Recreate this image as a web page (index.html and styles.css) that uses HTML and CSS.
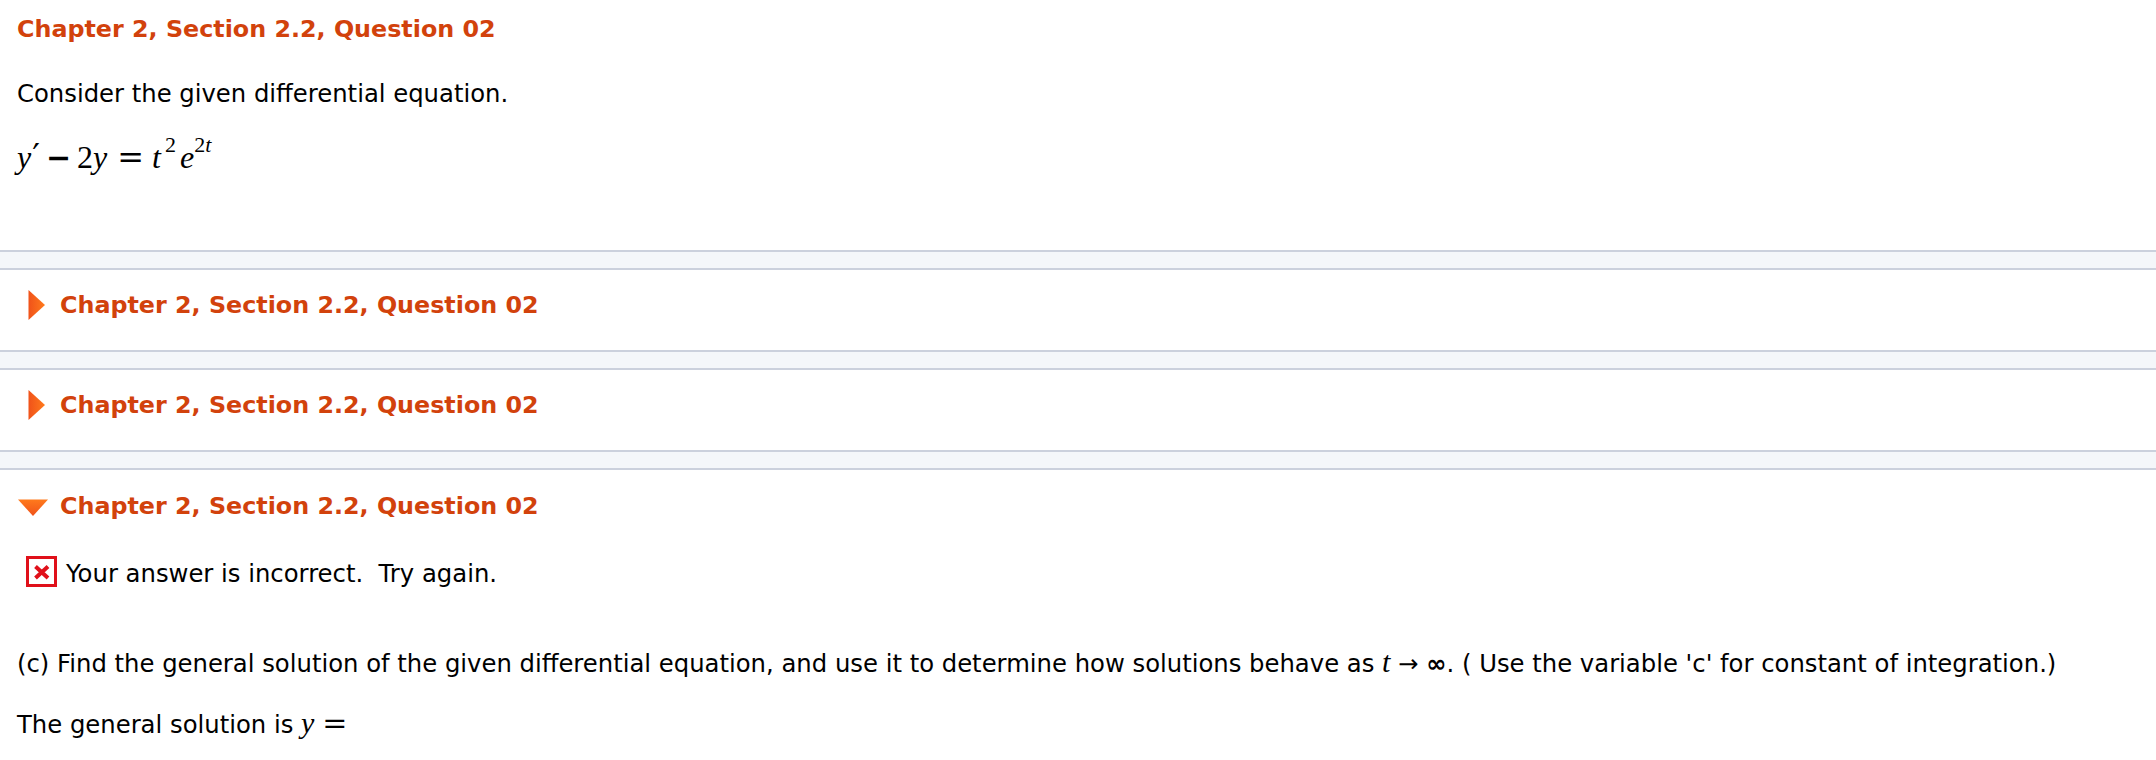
FILE: index.html
```html
<!DOCTYPE html>
<html lang="en">
<head>
<meta charset="utf-8">
<title>Chapter 2, Section 2.2, Question 02</title>
<link rel="stylesheet" href="styles.css">
</head>
<body>
<div class="intro">
  <h1 class="title">Chapter 2, Section 2.2, Question 02</h1>
  <p class="lead">Consider the given differential equation.</p>
  <div class="eq"><i>y</i><span class="prime">′</span><span class="minus">−</span><span class="num">2</span><i>y</i><span class="eqs">=</span><i>t</i><sup class="sq">2</sup><i class="ee">e</i><sup>2<i>t</i></sup></div>
</div>

<div class="sep"></div>
<div class="qhead">
  <svg class="arr-right" width="17" height="30" viewBox="0 0 17 30" aria-hidden="true">
    <defs><linearGradient id="gr1" x1="0" y1="0" x2="1" y2="0"><stop offset="0" stop-color="#f0521a"/><stop offset="1" stop-color="#ff7a1c"/></linearGradient></defs>
    <polygon points="0.5,0 17,15 0.5,30" fill="url(#gr1)"/>
  </svg>
  <span class="qtitle">Chapter 2, Section 2.2, Question 02</span>
</div>
<div class="sep"></div>
<div class="qhead">
  <svg class="arr-right" width="17" height="30" viewBox="0 0 17 30" aria-hidden="true">
    <defs><linearGradient id="gr2" x1="0" y1="0" x2="1" y2="0"><stop offset="0" stop-color="#f0521a"/><stop offset="1" stop-color="#ff7a1c"/></linearGradient></defs>
    <polygon points="0.5,0 17,15 0.5,30" fill="url(#gr2)"/>
  </svg>
  <span class="qtitle">Chapter 2, Section 2.2, Question 02</span>
</div>
<div class="sep"></div>
<div class="qhead open">
  <svg class="arr-down" width="30" height="17" viewBox="0 0 30 17" aria-hidden="true">
    <defs><linearGradient id="gr3" x1="0" y1="0" x2="0" y2="1"><stop offset="0" stop-color="#ff7a1c"/><stop offset="1" stop-color="#f0521a"/></linearGradient></defs>
    <polygon points="0,0.5 30,0.5 15,17" fill="url(#gr3)"/>
  </svg>
  <span class="qtitle">Chapter 2, Section 2.2, Question 02</span>
</div>

<div class="feedback">
  <svg class="xbox" width="31" height="31" viewBox="0 0 31 31" aria-hidden="true">
    <rect x="1.5" y="1.5" width="28" height="28" fill="#fff" stroke="#e0101a" stroke-width="3"/>
    <path d="M9.5 10.5 L22 22 M22 10.5 L9.5 22" stroke="#e0101a" stroke-width="4" fill="none"/>
  </svg>
  <span class="fbtext">Your answer is incorrect.&nbsp; Try again.</span>
</div>

<p class="part">(c) Find the general solution of the given differential equation, and use it to determine how solutions behave as <i class="m">t</i> <span class="arrow">→</span> <span class="inf">∞</span>. ( Use the variable 'c' for constant of integration.)</p>
<p class="answer">The general solution is <i class="my">y</i> <span class="meq">=</span></p>
</body>
</html>
```
FILE: styles.css
```css
html, body {
  margin: 0;
  padding: 0;
  background: #ffffff;
}
body {
  font-family: "DejaVu Sans", Verdana, sans-serif;
  font-size: 24.3px;
  line-height: 28px;
  color: #000000;
}

.intro {
  height: 250px;
  box-sizing: border-box;
  padding: 15px 0 0 17px;
}
.title {
  margin: 0;
  font-size: 23.8px;
  line-height: 28px;
  font-weight: bold;
  color: #d2420c;
}
.lead {
  margin: 37px 0 0 0;
}

.eq {
  margin-top: 29px;
  font-family: "Liberation Serif", "Times New Roman", serif;
  font-size: 32px;
  line-height: 40px;
  white-space: nowrap;
}
.eq i {
  font-style: italic;
}
.eq .prime {
  font-family: "DejaVu Serif", serif;
  font-size: 34px;
  line-height: 0;
  margin-left: 1px;
}
.eq .minus {
  font-family: "DejaVu Sans", sans-serif;
  font-weight: bold;
  font-size: 30px;
  margin: 0 6px 0 6px;
}
.eq .eqs {
  font-family: "DejaVu Serif", serif;
  margin: 0 8px 0 10px;
}
.eq sup {
  font-size: 22px;
  line-height: 0;
  vertical-align: 16px;
}
.eq .sq {
  margin-left: 4px;
}
.eq .ee {
  margin-left: 4px;
}

.sep {
  height: 16px;
  border-top: 2px solid #cbd1dd;
  border-bottom: 2px solid #cbd1dd;
  background: #f4f7fa;
}

.qhead {
  height: 80px;
  box-sizing: border-box;
  padding: 21px 0 0 28px;
  display: flex;
  align-items: flex-start;
}
.arr-right {
  margin-top: -1px;
  flex: none;
}
.qtitle {
  margin-left: 15px;
  font-size: 23.8px;
  font-weight: bold;
  color: #d2420c;
}
.qhead.open {
  height: auto;
  padding: 22px 0 0 18px;
}
.arr-down {
  margin-top: 7px;
  flex: none;
}
.qhead.open .qtitle {
  margin-left: 12px;
}

.feedback {
  margin-top: 36px;
  padding-left: 26px;
  display: flex;
  align-items: flex-start;
}
.xbox {
  flex: none;
}
.fbtext {
  margin: 4px 0 0 9px;
}

.part {
  margin: 62px 0 0 0;
  padding-left: 17px;
  white-space: nowrap;
}
.answer {
  margin: 33px 0 0 0;
  padding-left: 17px;
}
.m, .my {
  font-family: "Liberation Serif", "Times New Roman", serif;
  font-style: italic;
  font-size: 30px;
  line-height: 0;
}
.arrow {
  font-family: "DejaVu Sans", sans-serif;
}
.inf {
  font-family: "DejaVu Sans", sans-serif;
  font-weight: bold;
}
.meq {
  font-family: "DejaVu Serif", serif;
  font-size: 30px;
  line-height: 0;
}
```
